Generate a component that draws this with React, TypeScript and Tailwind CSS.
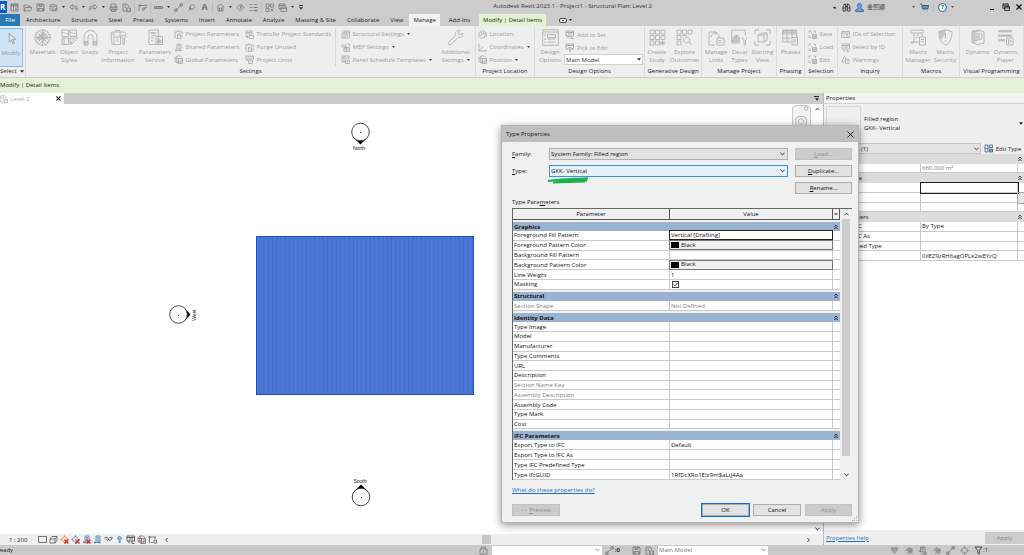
import type { ReactNode } from "react";

type Glyph = { d: string; fill?: string };

// 9x9 glyphs: quick access bar, small ribbon commands, status icons
const small: Record<string, Glyph> = {
    window: { d: "M1 1h7v7h-7zM1 3h7M3.5 3v5M5 5h2M5 6.5h2", fill: "M1 1h7v2h-7z" },
    open: { d: "M1 8V2h2.5l1 1H7v1.5M1 8l1.5-3.5H9L7.5 8z" },
    save: { d: "M1 1h6l1 1v6H1zM3 8V5.5h3.5V8M3 1v2.5h3V1", fill: "M1 5h2v3H1zM6.5 5H8v3H6.5zM3 1h3v2.5H3z" },
    cube: { d: "M4 1l3.5 1.5v4L4 8 1 6.5v-4zM1 2.5L4 4l3.5-1.5M4 4v4", fill: "M5.5 5h3v3.5h-3z" },
    undo: { d: "M3.5 1.5L1 4l2.500 2.500V5H6c1.500 0 2 .7 2 2.500 1-3-.2-4.500-2-4.500H3.500z" },
    redo: { d: "M5.500 1.500L8 4 5.500 6.500V5H3C1.500 5 1 5.700 1 7.500 0 4.500 1.200 3 3 3h2.500z" },
    print: { d: "M2 4V1h5v3M1 4h7v3H1zM2.500 6h4v2.500h-4z", fill: "M1 4h7v1H1z" },
    page: { d: "M1 1h4l1.500 1.500V4M1 1v7h2.500M2.500 3h2M2.500 4.500h1.500M4.500 5h4v3.500h-4z", fill: "M5 6h1v2H5zM7 5.500h1V8H7z" },
    measure: { d: "M1 1v7M8 1v4M1 2.500h7M3 1.500L1.500 2.500 3 3.500M4 5l1.500 3L7 5", fill: "M5 4h3v2H5z" },
    ruler: { d: "M.5 3.500h8v2h-8zM2.500 3.500v1M4.500 3.500v1M6.500 3.500v1", fill: "M.5 3.500h8v2h-8z" },
    line: { d: "M1.500 7.500L7.500 1.500M.7 6v2.300h2.300V6zM6 .7h2.300V3H6z" },
    tag: { d: "M1 8l3-3M5.500 1.500a2.200 2.200 0 1 1-.1 0M3 3.500L2.500 6l3 .5" },
    house: { d: "M.8 4L4.500 1l3.700 3M2 4v4h5V4M3.500 8V5h2v3" },
    diamond: { d: "M4.500 1L8 4.500 4.500 8 1 4.500zM4.500 3v3", fill: "M4.500 1L8 4.500H4.500z" },
    thin: { d: "M.5 1.500h3M.5 4.500h3M.5 7.500h3M5 1.500h3.500M5 4.500h3.500M5 7.500h3.500", fill: "M4.500 6.500h4v2h-4zM4.500 3.700h4v1.300h-4z" },
    close: { d: "M1 1h3v3H1zM5.500 1h3v3h-3zM1 5.500h3v3H1zM5.500 5.500l3 3M8.500 5.500l-3 3" },
    switcher: { d: "M1 1h6v3M1 1v5h2M3 4h5.500v4.500H3zM3 5.500h5.500M1 2.500h6" },
    params: { d: "M1 2h2V1h2v1h3.500v2M1 2v5c0 1 1 1.500 2 1.500M3.500 4h3v4.500h-3zM4.500 5.500h1M8 5v3.500" },
    shared: { d: "M3 1h4v5H3zM1 7.500h7M2 6v2.500M6 6v2.500M4 2.500h2M4 4h2" },
    globe: { d: "M4.500.7a3.800 3.800 0 1 0 .1 0M1 3.500h4M1 6h3M4 1C2 3 2 6 4 8M4.500 3.500h4v5h-4zM5.500 5h2M5.500 6.500h2" },
    transfer: { d: "M1 1h6v3H1zM1 2.500h6M4 5.500h4.500v3H4zM1 5v2h2M2 6l1 1-1 1" },
    units: { d: "M1 1h7.500v3H1zM3 1v1.500M5 1v1.500M7 1v1.500M1 5h2M3.500 5h4v3.500h-4zM5 6.500h1.500" },
    structural: { d: "M3 1h5.500v7H3zM3 3h5.500M1 3h2M1 3v5h2M4.500 4.500h2.500M4.500 6h2.500M5.500 1v2" },
    editType: { d: "M1 1h3v7H1zM1 4.500h3M5.500 1h3v2.500h-3zM5.500 5h3v3h-3z", fill: "M5.500 5h3v3h-3z" },
    mep: { d: "M1 2h4v2H1zM3 4v4.500h5.500V4.500H3M3 6h5.500M5.500 4.500v4M6 1h2.500v2" },
    schedule: { d: "M1 1h7v3M1 1v6h3M1 3h7M3 1v6M4.500 5h4v3.500h-4zM5.500 6.500h2" },
    location: { d: "M4.500.7a3.800 3.800 0 1 0 .1 0M2 2l2 1.500L2.500 6M6 1.500L5 3.500l2 2L6.500 7M6 3.500h2" },
    coords: { d: "M1 .5V8h7.500M1 8l4-4M7 6.500l1.500 1.500" },
    list: { d: "M1 1h7.500v5H1zM1 2.500h7.500M3 4h4M3 6v2.500M6 6v2.500h2.500" },
    pick: { d: "M1 1h7.500v4M1 1v5h2.500M1 2.500h7.500M4 4l1 4.500 1-2 2.500-.5z" },
    sel: { d: "M1 3V1h2M5.500 1h2v2M1 5.500v2h2M4.500 4.500h4v4h-4zM3 3l1.500 1.500M5.500 6.500h2", fill: "M4.500 4.500h4v4h-4z" },
    warn: { d: "M.7 7L3.500 1.500 5 4M.7 7h3M4.500 4.500h3.500v4H4.500zM5.500 6h1.500" },
    ids: { d: "M.7 1.500h8v6h-8zM.7 3h8M2.500 4.500h1M5 4.500h2M2.500 6h1M5 6h2" },
    funnel: { d: "M1 1h7L5.300 4.500V8L3.800 7V4.500z" },
    ring: { d: "M4.500 1.800a2.700 2.700 0 1 0 .1 0M4.500.3v1.500M4.500 7.200v1.500M.3 4.500h1.500M7.200 4.500h1.500" },
    flag: { d: "M1 5l4-3.500V3h3.500M3 5h5.500M3 7h4", fill: "M3 3h5.500v5L5 6.500z" },
    anchor: { d: "M2.500 1v5M.5 4l2 2.500L5 4M3 1h4v4l1.500 3h-5", fill: "M3 1h3v3H3zM4 5h3l1 3H5z" },
    heart: { d: "M1 2.500l3.500 5 3.500-5M1 2.500C2 1 3.500 1 4.500 2.500 5.500 1 7 1 8 2.500", fill: "M1 2.500C2 1 3.500 1 4.500 2.500 5.500 1 7 1 8 2.500L4.500 6z" },
    box: { d: "M.5 1.500h8v6H.5z" },
    box3d: { d: "M1 4h5v4H1zM1 4l2-2.500h5L6 4M8 1.500v4L6 8" },
    glasses: { d: "M.3 3C2 2 3 2 4.500 3.500 6 2 7 2 8.500 3M2 3.500c.5 2.500 2 2.500 2.500.5.5 2 2.500 2.500 3.500-1.500" },
    bulb: { d: "M4.500 1.500a1.800 1.800 0 1 0 .1 0M4 5.500v2h1.200v-2", fill: "M4.500 1.500a1.800 1.800 0 1 0 .1 0" },
    crop: { d: "M0 2h8M1.500 1v7M6 5h2.500v3H6zM3 7.500h2M7 2v2" },
    cart: { d: "M0 1h1.500l1.200 5h5L8.700 2.500H2M3.300 8h.4M7 8h.4", fill: "M2 2.500h6.700L7.700 6h-5z" },
    binoc: { d: "M1 8V4l1.500-3h1.200v7zM8 8V4L6.500 1H5.300v7zM3.700 3.500h1.600M1 5h2.700M5.300 5H8" },
    link: { d: "M1 3h7v5H1zM2.500 3V1h4v2M4.500 4.500v2" },
};

// 17x17 glyphs for the large ribbon buttons
const large: Record<string, Glyph> = {
    cursor: { d: "M6 3v9l2.300-2 1.700 4 1.500-.7-1.700-3.800H13z" },
    materials: {
        d: "M8.500.700a7.800 7.800 0 1 0 .1 0M3 3l11 11M14 3L3 14M8.500 1v15M1 8.500h15M5 1.500L15.500 12M1.500 5L12 15.500M12 1.500L1.500 12M15.500 5L5 15.500",
        fill: "M5 5h3v3H5zM9 9h3v3H9zM9 2l3 3-3 2zM2 9l3 3 2-3zM11 6h4l-2 2z",
    },
    objects: { d: "M1 1h6.500v6.500H1zM9 1h6.500v6.500H9zM1 9h6.500v6.500H1zM9 15.500V9h3M1 4c2-2 4 2 6.500 0M9 4c2-2 4 2 6.500 0M3 9v6M9.500 15.500l1-3L15 7.500l1.500 1.500-4.500 5z" },
    magnet: { d: "M2 16V8a6.500 6.500 0 0 1 13 0v8h-4V8a2.500 2.500 0 0 0-5 0v8zM2 12.500h4M11 12.500h4", fill: "M2 12.500h4V16H2zM11 12.500h4V16h-4z" },
    info: { d: "M1 5c0-2 1.500-2 3-2h9c2 0 3 .5 3 2M1 5h3v10c0 1-2 1-2 0zM5 1.500h5V8M5 8h5.500v7.500H4M6.500 10h2M6.500 12h2M12 6c-1 2 .5 3 1 3v6.500h1.500V9c1.500-.5 2-2 1-3.500L14 7z" },
    service: { d: "M2 1h9.500v14.500H2zM4 4h3M4 6.500h5M4 9h3M4 11.500h2M9 7.500h6.500v8H9zM10.500 14v-2M12.300 14v-4M14 14v-3", fill: "M10 9.500h1.500V14H10zM12.500 11H14v3h-1.500zM3.500 3h6v2h-6z" },
    wrench: { d: "M1.500 13.500l7-7C7.500 3.500 10 .7 13 1.500L10.800 4l1.700 2L15.500 4c.8 3-2 5.500-4.500 4.500l-7 7c-2 1-3.300-.5-2.500-2z" },
    options: { d: "M.7.7h15.600v15.600H.7zM.7 3h15.600M5.500 5.500h8v3h-8zM5.500 10h8M5.500 13h8M3 5.500v.5M3 10v.5M3 13v.5", fill: "M2.500 5h1.500v2H2.500zM2.500 9.500h1.500V11H2.500zM2.500 12.500h1.500V14H2.500z" },
    study: { d: "M1 1h4v4H1zM6.500 1h4v4h-4zM12 1h4v4h-4zM1 6.500h4v4H1zM6.500 6.500h4v4h-4zM12 6.500h4v4h-4zM1 12h4v4H1zM6.500 12h4v4h-4zM13.500 11.500v5M11 14h5M11.700 12.200l3.600 3.600M15.300 12.200l-3.600 3.600" },
    explore: { d: "M1 1h4v4H1zM6.500 1h4v4h-4zM12 1h4v4h-4zM1 6.500h4v4H1zM6.500 6.500h4M1 12h4v4H1zM10.500 8a3 3 0 1 0 .1 0M12.500 13l3 3" },
    links: { d: "M1 3h7l3 3v3M1 3v13h6M11 9h5v7h-7V9zM3 8c0-3 4-4 5-4M6.500 2.500l2 1.500-2 2M10.500 11.500h3M10.500 13.500h3" },
    decal: { d: "M.7 1h13.600v6M.7 1v13h8M3 10l3-4 3 4M12 8c-1 2 0 3 1 3v5h1.500v-5c1-.5 1.500-2 .5-3M.7 12h8", fill: "M1 13V9l4-4 4 5v3z" },
    view: { d: "M1 5V1h4M12 1h4v4M1 12v4h4M16 12v4h-4M4 6l4-2h5v7l-3 2H4zM4 6h6v7M10 6l3-2" },
    phases: { d: "M.7 1h14v8M.7 1v12h8M.7 5h14M.7 9h8M5 1v12M10 1v8M10 8.500h5.500v7.500H10zM11.500 11h3M11.500 13h3", fill: "M.7 1h14v3H.7z" },
    macro: { d: "M2 1h10c2 0 2 3 0 3H2C0 4 0 1 2 1zM4 4v8c0 3-3 3-3 1h8M12 4v3M6 6h3M6 8.500h2M9.500 8h6v8h-6zM11 10.500h3M11 12.500h3" },
    shield: { d: "M8.500.7l6.500 2c0 7-2 11-6.500 13.500C4 13.700 2 9.700 2 2.700zM8.500 4v5M8.500 11v1.500", fill: "M8.500.7L2 2.700c0 3 .3 6 1.500 8.500L8.500 5z" },
    dynamo: { d: "M3 2.500L9 1l6 2v11l-6 1.500-6-2zM6 5v7l7-2.500V5z", fill: "M3 2.500L9 1l2 1.200L6 4v10l-3-1zM7 6l4 .5V9l-4 2z" },
    player: { d: "M2 2h12M2 6.500h12M2 11h6M9.500 9h6.500v7H9.500zM11.500 10.500v4l3-2z", fill: "M1 1h14v2.500H1zM1 5.500h14V8H1zM1 10h7v2.500H1z" },
};

function Icon({ name, className = "size-[9px]", crossed }: { name: string; className?: string; crossed?: boolean }) {
    const g = small[name];
    return (
        <svg viewBox="0 0 9 9" className={`${className} shrink-0`} fill="none" stroke="currentColor" strokeWidth={0.8} aria-hidden="true">
            {g.fill && <path d={g.fill} fill="currentColor" fillOpacity={0.5} stroke="none" />}
            <path d={g.d} />
            {crossed && <path d="M4.500 4.500l4 4M8.500 4.500l-4 4" stroke="#d22" strokeWidth={1.200} />}
        </svg>
    );
}

function BigIcon({ name }: { name: string }) {
    const g = large[name];
    return (
        <svg viewBox="0 0 17 17" className="size-[17px] shrink-0" fill="none" stroke="currentColor" strokeWidth={0.9} aria-hidden="true">
            {g.fill && <path d={g.fill} fill="currentColor" fillOpacity={0.6} stroke="none" />}
            <path d={g.d} />
        </svg>
    );
}

function Caret({ tiny, className = "" }: { tiny?: boolean; className?: string }) {
    return (
        <svg viewBox="0 0 5 3" className={`${tiny ? "w-[3px] h-[2px]" : "w-[4px] h-[3px]"} shrink-0 ${className}`} aria-hidden="true">
            <path d="M0 0h5L2.500 3z" fill="currentColor" />
        </svg>
    );
}

function Chevron({ className = "" }: { className?: string }) {
    return (
        <svg viewBox="0 0 6 4" className={`w-[5px] h-[4px] shrink-0 ${className}`} fill="none" stroke="currentColor" aria-hidden="true">
            <path d="M.5.500L3 3 5.500.500" />
        </svg>
    );
}

function Collapse() {
    return (
        <svg viewBox="0 0 5 6" className="w-[4px] h-[6px]" fill="none" stroke="#111" strokeWidth={1.1} aria-hidden="true">
            <path d="M.5 2.700L2.500.7l2 2M.5 5.500l2-2 2 2" />
        </svg>
    );
}

const quick = [
    "window", "open", "save", "cube", "v", "undo", "v", "redo", "v", "print", "page", "|", "measure", "|",
    "ruler", "v", "line", "tag", "A", "|", "house", "v", "diamond", "thin", "|", "close", "switcher", "v",
];

function TitleBar() {
    return (
        <header className="h-[14px] flex items-center justify-between bg-[#cccccc]">
            <div className="flex-[57] flex items-center text-[#777]">
                <div className="w-[7px] h-[12px] mr-px bg-[#0b5cc4] text-white text-[8px] leading-[11px] font-bold">R</div>
                {quick.map((q, i) => {
                    if (q === "|") return <span key={i} className="w-px h-[11px] mx-px bg-[#bbb]" />;
                    if (q === "v")
                        return (
                            <button key={i} aria-label="More" className="w-[7px] flex justify-center text-[#333]">
                                <Caret tiny />
                            </button>
                        );
                    return (
                        <button key={i} aria-label={q} className="w-[13px] flex justify-center font-bold text-[9px] leading-[10px]">
                            {q === "A" ? "A" : <Icon name={q} />}
                        </button>
                    );
                })}
                <button aria-label="Customize" className="w-[10px] flex flex-col items-center gap-px text-[#333]">
                    <span className="w-[4px] h-px bg-[#333]" />
                    <Caret />
                </button>
            </div>
            <h1 className="h-[13px] leading-[11px] text-[#333] font-medium">Autodesk Revit 2023.1 - Project1 - Structural Plan: Level 2</h1>
            <div className="flex-[43] flex items-center justify-end text-[#555]">
                <span className="text-[5px] text-black w-[6px]">◂</span>
                <button aria-label="Search" className="w-[14px] flex justify-center text-[#222]"><Icon name="binoc" /></button>
                <button aria-label="User" className="w-[13px] flex justify-center">
                    <svg viewBox="0 0 9 9" className="size-[9px]" aria-hidden="true">
                        <path d="M4.500.6C6.300.6 6.500 2 6.300 3.300 6 4.700 5.700 5 5.700 5.500L8.300 7v1.400H.7V7l2.600-1.500C3.300 5 3 4.700 2.700 3.300 2.500 2 2.700.6 4.500.6z" fill="#6fa8e6" stroke="#1d4f9c" strokeWidth={0.8} />
                    </svg>
                </button>
                <span className="w-[46px] pl-px text-[#444]">金熙顯</span>
                <Caret tiny />
                <button aria-label="Store" className="w-[18px] flex justify-center text-[#1c4b72]"><Icon name="cart" /></button>
                <span className="w-px h-[9px] bg-[#bbb]" />
                <button aria-label="Help" className="size-[9px] mx-[4px] rounded-full border border-[#1c5b8a] bg-white text-[#1c5b8a] font-bold leading-[7px]">?</button>
                <Caret tiny className="mr-[36px]" />
                <button aria-label="Minimize" className="w-[4px] h-[5px] mr-[8px] border-b border-black" />
                <button aria-label="Restore" className="w-[8px] mr-[6px] text-black"><Icon name="switcher" className="size-[8px]" /></button>
                <button aria-label="Close" className="w-[8px]">
                    <svg viewBox="0 0 6 6" className="size-[6px]" stroke="#111" strokeWidth={1.200} aria-hidden="true"><path d="M.5.500l5 5M5.500.500l-5 5" /></svg>
                </button>
            </div>
        </header>
    );
}

const tabs = ["Architecture", "Structure", "Steel", "Precast", "Systems", "Insert", "Annotate", "Analyze", "Massing & Site", "Collaborate", "View"];

function RibbonTabs() {
    return (
        <nav className="h-[12px] flex items-stretch gap-px bg-[#cccccc] text-[#222] font-medium leading-[12px]">
            <button className="w-[20px] bg-[#2878b5] text-white">File</button>
            {tabs.map((t) => (
                <button key={t} className="px-[5px]">{t}</button>
            ))}
            <button className="px-[4px] bg-[#f2f2f2]">Manage</button>
            <button className="px-[8px]">Add-Ins</button>
            <button className="px-[4px] bg-[#e3f2d3]">Modify | Detail Items</button>
            <button aria-label="Ribbon display" className="ml-[12px] flex items-center gap-[2px]">
                <span className="w-[8px] h-[5px] rounded-xs border border-[#444] bg-[#eee] flex items-center justify-center"><span className="w-[2px] h-px bg-[#444]" /></span>
                <Caret tiny />
            </button>
        </nav>
    );
}

function Big({ icon, lines, width, caret }: { icon: string; lines: string[]; width: string; caret?: boolean }) {
    return (
        <button className={`${width} h-[40px] pt-[3px] flex flex-col items-center leading-[8px] whitespace-nowrap`}>
            <span className="text-[#b0b0b0]"><BigIcon name={icon} /></span>
            <span className="h-[2px]" />
            {lines.map((l, i) => (
                <span key={l} className="flex items-center gap-[3px]">
                    {l}
                    {caret && i === lines.length - 1 && <Caret tiny className="text-[#444]" />}
                </span>
            ))}
        </button>
    );
}

function Rows({ items, className = "" }: { items: [string, string, boolean?][]; className?: string }) {
    return (
        <div className={`pt-[2px] flex flex-col ${className}`}>
            {items.map(([icon, label, more]) => (
                <button key={label} className="h-[13px] flex items-center gap-[3px] whitespace-nowrap">
                    <span className="text-[#a8a8a8]"><Icon name={icon} /></span>
                    {label}
                    {more && <Caret tiny className="text-[#444]" />}
                </button>
            ))}
        </div>
    );
}

function Panel({ title, children }: { title: ReactNode; children: ReactNode }) {
    return (
        <section className="min-w-0 flex flex-col border-r border-[#dcdcdc]">
            <div className="h-[40px] flex justify-center text-[#9c9c9c]">{children}</div>
            <h2 className="h-[11px] leading-[10px] text-center text-[#222] font-medium whitespace-nowrap">{title}</h2>
        </section>
    );
}

function Ribbon() {
    return (
        <div className="h-[52px] grid grid-cols-[26fr_450fr_59fr_110fr_57fr_75fr_28fr_33fr_65fr_57fr_64fr] bg-[#eeeeee] border-b border-[#cfcfcf]">
            <Panel title={<span className="flex items-center gap-[3px]">Select <Caret /></span>}>
                <button className="w-[23px] h-[39px] mr-auto mt-[2px] pt-px border border-[#86bfee] border-l-0 bg-[#cde3f6] flex flex-col items-center leading-[8px]">
                    <BigIcon name="cursor" />
                    <span className="mt-[2px]">Modify</span>
                </button>
            </Panel>
            <Panel title="Settings">
                <Big icon="materials" lines={["Materials"]} width="w-[30px]" />
                <Big icon="objects" lines={["Object", "Styles"]} width="w-[23px]" />
                <Big icon="magnet" lines={["Snaps"]} width="w-[19px]" />
                <Big icon="info" lines={["Project", "Information"]} width="w-[37px]" />
                <Big icon="service" lines={["Parameters", "Service"]} width="w-[37px]" />
                <Rows className="w-[71px]" items={[["params", "Project Parameters"], ["shared", "Shared Parameters"], ["globe", "Global Parameters"]]} />
                <Rows className="w-[90px]" items={[["transfer", "Transfer Project Standards"], ["params", "Purge Unused"], ["units", "Project Units"]]} />
                <span className="w-px h-[38px] mt-[2px] mr-[5px] bg-[#d6d6d6]" />
                <Rows className="w-[97px]" items={[["structural", "Structural Settings", true], ["mep", "MEP Settings", true], ["schedule", "Panel Schedule Templates", true]]} />
                <Big icon="wrench" lines={["Additional", "Settings"]} width="w-[36px]" caret />
            </Panel>
            <Panel title="Project Location">
                <Rows className="w-[55px]" items={[["location", "Location"], ["coords", "Coordinates", true], ["globe", "Position", true]]} />
            </Panel>
            <Panel title="Design Options">
                <Big icon="options" lines={["Design", "Options"]} width="w-[28px]" />
                <div className="w-[79px] pt-[2px] flex flex-col">
                    <button className="h-[13px] pl-px flex items-center gap-[3px]"><Icon name="list" />Add to Set</button>
                    <button className="h-[13px] pl-px flex items-center gap-[3px]"><Icon name="pick" />Pick to Edit</button>
                    <div className="h-[11px] flex items-center bg-white border border-[#d0d0d0] text-[#333]">
                        <select aria-label="Active design option" className="flex-1 px-px appearance-none outline-none"><option>Main Model</option></select>
                        <Caret className="mr-px" />
                    </div>
                </div>
            </Panel>
            <Panel title="Generative Design">
                <Big icon="study" lines={["Create", "Study"]} width="w-[23px]" />
                <Big icon="explore" lines={["Explore", "Outcomes"]} width="w-[32px]" />
            </Panel>
            <Panel title="Manage Project">
                <Big icon="links" lines={["Manage", "Links"]} width="w-[25px]" />
                <Big icon="decal" lines={["Decal", "Types"]} width="w-[22px]" />
                <Big icon="view" lines={["Starting", "View"]} width="w-[24px]" />
            </Panel>
            <Panel title="Phasing"><Big icon="phases" lines={["Phases"]} width="w-[24px]" /></Panel>
            <Panel title="Selection">
                <Rows className="w-[27px]" items={[["sel", "Save"], ["sel", "Load"], ["sel", "Edit"]]} />
            </Panel>
            <Panel title="Inquiry">
                <Rows className="w-[59px]" items={[["ids", "IDs of Selection"], ["list", "Select by ID"], ["warn", "Warnings"]]} />
            </Panel>
            <Panel title="Macros">
                <Big icon="macro" lines={["Macro", "Manager"]} width="w-[28px]" />
                <Big icon="shield" lines={["Macro", "Security"]} width="w-[26px]" />
            </Panel>
            <Panel title="Visual Programming">
                <Big icon="dynamo" lines={["Dynamo"]} width="w-[28px]" />
                <Big icon="player" lines={["Dynamo", "Player"]} width="w-[28px]" />
            </Panel>
        </div>
    );
}

// Plan drawing: elevation marks round one filled region
function Drawing() {
    return (
        <svg width={812} height={427} viewBox="0 104 812 427" className="block shrink-0" role="img" aria-label="Level 2 plan">
            <defs>
                <pattern id="hatch" width={4.250} height={10} x={256} patternUnits="userSpaceOnUse">
                    <rect width={4.250} height={10} fill="#4d77d3" />
                    <rect x={3.200} width={1} height={10} fill="#406bcb" />
                </pattern>
            </defs>
            <rect x={256.500} y={236.500} width={217} height={158} fill="url(#hatch)" stroke="#1a4fc8" />
            <g fill="#fff" stroke="#333" strokeWidth={0.9}>
                <path d="M353.500 137.500L360.500 144.500 367.500 137.500z" fill="#000" stroke="none" />
                <circle cx={360.500} cy={132} r={8.800} />
                <path d="M184 307.500L190.500 314.500 184 321.500z" fill="#000" stroke="none" />
                <circle cx={178.500} cy={314.500} r={8.800} />
                <path d="M354 491.500L361 484.500 368 491.500z" fill="#000" stroke="none" />
                <circle cx={361} cy={497} r={8.800} />
            </g>
            <g fill="#333">
                <rect x={360} y={132} width={1} height={1} />
                <rect x={178} y={315} width={1} height={1} />
                <rect x={361} y={497} width={1} height={1} />
            </g>
            <g fontSize={5} fill="#111" textAnchor="middle" fontFamily="Liberation Sans, sans-serif">
                <text x={359} y={150}>North</text>
                <text x={360} y={483}>South</text>
                <text transform="translate(196 315) rotate(-90)">West</text>
            </g>
        </svg>
    );
}

const viewIcons: [string, string, boolean?][] = [
    ["box", "text-[#555]"], ["box3d", "text-[#555]"], ["ring", "text-[#e08a1c]", true], ["ring", "text-[#3a78b0]", true], ["shared", "text-[#3a78b0]", true],
    ["shared", "text-[#3a78b0]"], ["glasses", "text-[#444]"], ["bulb", "text-[#2f7fd0]"], ["list", "text-[#444]"], ["globe", "text-[#806a7a]"], ["crop", "text-[#555]"],
];

function ViewArea() {
    return (
        <div className="flex-1 min-w-0 flex flex-col bg-white">
            <div className="h-[11px] flex items-center justify-between bg-[#cbcbcb]">
                <div className="w-[64px] h-full flex items-center bg-white text-[#a8a8a8]">
                    <Icon name="page" className="size-[8px]" />
                    <span className="ml-[2px] flex-1">Level 2</span>
                    <button aria-label="Close view" className="mr-[3px]">
                        <svg viewBox="0 0 6 6" className="size-[5px]" stroke="#111" strokeWidth={1.300} aria-hidden="true"><path d="M.5.500l5 5M5.500.500l-5 5" /></svg>
                    </button>
                </div>
                <button aria-label="Open views" className="mr-[4px] flex flex-col items-center gap-px text-[#222]">
                    <span className="w-[5px] h-px bg-[#222]" />
                    <Caret />
                </button>
            </div>
            <div className="flex-1 min-h-0 flex">
                <div className="flex-1 min-w-0 relative overflow-hidden">
                    <Drawing />
                    <div className="absolute right-px top-px w-[19px] h-[60px] rounded-t-sm border border-[#c8c8c8] bg-[#f4f4f4] text-[#b5b5b5] flex flex-col items-center">
                        <svg viewBox="0 0 17 20" className="w-[17px] h-[20px] shrink-0" fill="none" stroke="currentColor" aria-hidden="true">
                            <circle cx={13} cy={2.500} r={1.800} />
                            <rect x={2.500} y={10.500} width={11} height={10} rx={4} />
                            <circle cx={8} cy={15.500} r={2.800} />
                        </svg>
                    </div>
                </div>
                <div className="w-[11px] py-[3px] flex flex-col items-center justify-between text-[#111]">
                    <Chevron className="rotate-180" />
                    <Chevron />
                </div>
            </div>
            <div className="h-[11px] pl-[9px] flex items-center bg-[#efefef] text-[#222]">
                <span className="w-[28px]">1 : 200</span>
                {viewIcons.map(([name, color, crossed], i) => (
                    <button key={i} aria-label={name} className={`w-[11px] flex justify-center ${color}`}><Icon name={name} crossed={crossed} /></button>
                ))}
                <Chevron className="ml-[6px] rotate-90" />
                <div className="ml-auto h-[9px] w-[329px] flex items-center justify-between">
                    <span className="w-[9px] h-full bg-[#c8c8c8]" />
                    <Chevron className="-rotate-90" />
                </div>
                <span className="w-[12px]" />
            </div>
        </div>
    );
}

type Prop = [string, string];
const groups: { title: string; rows: Prop[] }[] = [
    { title: "Dimensions", rows: [["Area", "660.000 m²"]] },
    { title: "Identity Data", rows: [["Image", ""], ["Comments", ""], ["Mark", ""]] },
    { title: "IFC Parameters", rows: [["Export to IFC", "By Type"], ["Export to IFC As", ""], ["IFC Predefined Type", ""], ["IfcGUID", "0iIEZ9zRH6agOPLk2wEYzQ"]] },
];

function Properties() {
    return (
        <aside className="w-[201px] shrink-0 flex flex-col border-l border-[#bdbdbd] bg-white text-[#222]">
            <h2 className="h-[11px] pl-[2px] leading-[10px] bg-[#f3f3f3] border-b border-[#d5d5d5]">Properties</h2>
            <div className="h-[39px] pl-[2px] pr-px flex items-center gap-[3px] bg-[#efefef] leading-[9px]">
                <div className="w-[35px] h-[36px] border border-[#d8d8d8]" />
                <div className="flex-1">
                    <p>Filled region</p>
                    <p>GKK- Vertical</p>
                </div>
                <Caret />
            </div>
            <div className="h-[11px] flex items-center bg-[#efefef]">
                <div className="w-[157px] h-[11px] flex items-center bg-[#e3e3e3] border border-[#c4c4c4]">
                    <select aria-label="Selected elements" className="flex-1 pl-px appearance-none outline-none"><option>Detail Items (1)</option></select>
                    <Chevron className="mr-px" />
                </div>
                <button className="flex-1 flex items-center justify-center gap-[3px] whitespace-nowrap"><span className="text-[#2f5f88]"><Icon name="editType" /></span>Edit Type</button>
            </div>
            <table className="w-full h-[107px] table-fixed border-separate border-spacing-0 leading-[8px]">
                <colgroup>
                    <col />
                    <col className="w-[97px]" />
                    <col className="w-[6px]" />
                </colgroup>
                {groups.map((g) => (
                    <tbody key={g.title}>
                        <tr className="bg-[#dcdcdc]">
                            <th colSpan={2} className="pl-[2px] text-left font-normal border-b border-[#dcdcdc]">{g.title}</th>
                            <td><Collapse /></td>
                        </tr>
                        {g.rows.map(([name, value]) => (
                            <tr key={name}>
                                <td className="pl-[2px] border-r border-b border-[#c9c9c9] whitespace-nowrap">{name}</td>
                                <td className={`pl-px border-r border-b border-[#c9c9c9] ${name === "Image" ? "outline outline-[#222]" : ""} ${name === "Area" ? "text-[#777]" : ""}`}>{value}</td>
                                <td className={name === "Comments" ? "bg-[#e4e4e4] outline outline-[#aaa]" : "border-b border-[#c9c9c9]"} />
                            </tr>
                        ))}
                    </tbody>
                ))}
            </table>
            <div className="mt-auto h-[15px] pl-[2px] flex items-center justify-between bg-[#efefef]">
                <a href="#help" className="text-[#1a6fc4] underline">Properties help</a>
                <button className="w-[39px] h-[12px] bg-[#cccccc] text-[#888]">Apply</button>
            </div>
        </aside>
    );
}

const typeGroups: { title: string; rows: Prop[] }[] = [
    {
        title: "Graphics",
        rows: [["Foreground Fill Pattern", "Vertical [Drafting]"], ["Foreground Pattern Color", "Black"], ["Background Fill Pattern", ""], ["Background Pattern Color", "Black"], ["Line Weight", "1"], ["Masking", ""]],
    },
    { title: "Structural", rows: [["Section Shape", "Not Defined"]] },
    {
        title: "Identity Data",
        rows: [["Type Image", ""], ["Model", ""], ["Manufacturer", ""], ["Type Comments", ""], ["URL", ""], ["Description", ""], ["Section Name Key", ""], ["Assembly Description", ""], ["Assembly Code", ""], ["Type Mark", ""], ["Cost", ""]],
    },
    { title: "IFC Parameters", rows: [["Export Type to IFC", "Default"], ["Export Type to IFC As", ""], ["Type IFC Predefined Type", ""], ["Type IfcGUID", "1RfDcXRo1EIx9m$aLtJ4Aa"]] },
];
const readOnly = ["Section Shape", "Section Name Key", "Assembly Description"];

function Value({ name, value }: { name: string; value: string }) {
    if (name === "Masking")
        return (
            <span className="relative block size-[7px] ml-[2px]">
                <input type="checkbox" defaultChecked aria-label="Masking" className="block size-[7px] appearance-none border border-[#444] bg-white" />
                <svg viewBox="0 0 7 7" className="absolute inset-0 size-[7px] pointer-events-none" fill="none" stroke="#222" strokeWidth={0.9} aria-hidden="true"><path d="M1.700 3.500l1.300 1.400L5.500 2" /></svg>
            </span>
        );
    if (value === "Black")
        return (
            <button className="w-full h-[8px] leading-[7px] flex items-center gap-[2px] bg-[#f0f0f0] outline outline-[#777] text-left">
                <span className="w-[8px] h-[6px] ml-px bg-black" />
                Black
            </button>
        );
    if (name === "Foreground Fill Pattern")
        return <input aria-label={name} defaultValue={value} className="block w-full h-[8px] pl-px leading-[8px] outline outline-[#222]" />;
    return <span className="pl-px">{value}</span>;
}

function DialogButton({ children, className = "", disabled }: { children: ReactNode; className?: string; disabled?: boolean }) {
    return (
        <button disabled={disabled} className={`h-[12px] leading-[10px] border ${disabled ? "bg-[#cccccc] border-[#c2c2c2] text-[#909090]" : "bg-[#e2e2e2] border-[#adadad] text-[#111]"} ${className}`}>
            {children}
        </button>
    );
}

function TypeProperties() {
    return (
        <div role="dialog" aria-labelledby="type-properties" className="absolute left-[501px] top-[125px] w-[358px] bg-[#f0f0f0] text-[#111] border border-[#b5b5b5] shadow-[0_2px_8px_rgba(0,0,0,0.45)]">
            <div className="h-[16px] px-[4px] flex items-center justify-between bg-[#bfbfbf]">
                <h2 id="type-properties">Type Properties</h2>
                <button aria-label="Close dialog">
                    <svg viewBox="0 0 7 7" className="size-[7px]" stroke="#111" strokeWidth={0.9} aria-hidden="true"><path d="M.5.500l6 6M6.500.500l-6 6" /></svg>
                </button>
            </div>
            <div className="pl-[10px] pr-[6px] pt-[6px]">
                <div className="grid grid-cols-[37px_1fr_57px] gap-y-[5px] items-center">
                    <label htmlFor="family"><u>F</u>amily:</label>
                    <div className="h-[12px] mr-[7px] flex items-center bg-[#e1e1e1] border border-[#b0b0b0]">
                        <select id="family" className="flex-1 pl-px appearance-none outline-none"><option>System Family: Filled region</option></select>
                        <Chevron className="mr-[2px]" />
                    </div>
                    <DialogButton disabled><u>L</u>oad...</DialogButton>
                    <label htmlFor="type"><u>T</u>ype:</label>
                    <div className="relative h-[12px] mr-[7px] flex items-center bg-[#e5f1fb] border border-[#3c8fd9]">
                        <select id="type" className="flex-1 pl-px appearance-none outline-none"><option>GKK- Vertical</option></select>
                        <Chevron className="mr-[2px]" />
                        <svg viewBox="0 0 44 8" className="absolute -left-[3px] top-[10px] w-[44px] h-[8px] pointer-events-none" fill="none" stroke="#1cb14b" strokeWidth={2} aria-hidden="true">
                            <path d="M1 5C10 3.500 24 2.500 41 2.500L8 5l32-.5L6 6.500 38 5.500" />
                        </svg>
                    </div>
                    <DialogButton><u>D</u>uplicate...</DialogButton>
                    <DialogButton className="col-start-3"><u>R</u>ename...</DialogButton>
                </div>
                <p className="mt-[3px] h-[11px] leading-[10px]">Type Para<u>m</u>eters</p>
                <div className="h-[272px] flex border-t border-l border-[#666] bg-white">
                    <table className="flex-1 h-full table-fixed border-separate border-spacing-0 leading-[8px] font-medium">
                        <colgroup>
                            <col className="w-[157px]" />
                            <col />
                            <col className="w-[7px]" />
                        </colgroup>
                        <thead>
                            <tr className="h-[11px]">
                                <th className="font-medium bg-[#f0f0f0] border-r border-b border-[#555]">Parameter</th>
                                <th className="font-medium bg-[#f0f0f0] border-r border-b border-[#555]">Value</th>
                                <th className="font-medium bg-[#f0f0f0] border-r border-b border-[#555]">=</th>
                            </tr>
                        </thead>
                        {typeGroups.map((g) => (
                            <tbody key={g.title}>
                                <tr className="h-[11px] bg-[#9ab3d1]">
                                    <th colSpan={2} className="pl-px text-left font-bold border-t-2 border-[#f0f0f0]">{g.title}</th>
                                    <td className="border-t-2 border-[#f0f0f0] pl-px"><Collapse /></td>
                                </tr>
                                {g.rows.map(([name, value]) => (
                                    <tr key={name} className={readOnly.includes(name) ? "text-[#808080]" : ""}>
                                        <td className="pl-px border-r border-b border-[#cacaca] whitespace-nowrap">{name}</td>
                                        <td className="p-0 border-r border-b border-[#cacaca]"><Value name={name} value={value} /></td>
                                        <td className="border-b border-[#cacaca]" />
                                    </tr>
                                ))}
                            </tbody>
                        ))}
                    </table>
                    <div className="w-[12px] bg-[#f0f0f0] flex flex-col items-center py-[3px] gap-[3px]">
                        <Chevron className="rotate-180" />
                        <span className="w-[8px] h-[237px] bg-[#cdcdcd]" />
                        <Chevron className="mt-auto" />
                    </div>
                </div>
                <a href="#properties" className="block mt-[6px] leading-[9px] text-[#1a6fc4] underline">What do these properties do?</a>
                <div className="mt-[9px] mb-[6px] flex gap-[4px]">
                    <DialogButton disabled className="w-[48px] mr-auto">&lt;&lt; <u>P</u>review</DialogButton>
                    <DialogButton className="w-[47px] outline outline-[#0a6cd6] border-[#0a6cd6]">OK</DialogButton>
                    <DialogButton className="w-[48px]">Cancel</DialogButton>
                    <DialogButton disabled className="w-[47px]">Apply</DialogButton>
                </div>
            </div>
            <svg viewBox="0 0 6 6" className="absolute right-0 bottom-0 size-[6px]" fill="#aaa" aria-hidden="true"><path d="M4 0h1v1H4zM2 2h1v1H2zM4 2h1v1H4zM0 4h1v1H0zM2 4h1v1H2zM4 4h1v1H4z" /></svg>
        </div>
    );
}

function StatusBar() {
    return (
        <footer className="h-[10px] flex items-center bg-[#c9c9c9] text-[#777] overflow-hidden">
            <span className="-ml-[4px] text-[#222]">Ready</span>
            <div className="ml-auto flex items-center">
                <Icon name="link" />
                <div className="w-[110px] h-[9px] ml-[4px] flex items-center bg-white">
                    <select aria-label="Workset" className="flex-1 appearance-none outline-none"><option></option></select>
                    <Chevron className="mr-[2px]" />
                </div>
                <span className="ml-[3px] flex items-center gap-px"><Icon name="line" /><b className="text-[#333]">:0</b></span>
                <span className="ml-[12px] flex gap-[4px]"><Icon name="save" /><Icon name="page" /></span>
                <div className="w-[110px] h-[9px] ml-[4px] flex items-center bg-white">
                    <select aria-label="Design option" className="flex-1 pl-px appearance-none outline-none"><option>Main Model</option></select>
                    <Chevron className="mr-[2px]" />
                </div>
                <span className="ml-[122px] mr-[36px] flex items-center gap-[5px]">
                    <Icon name="heart" /><Icon name="flag" /><Icon name="anchor" /><Icon name="flag" /><Icon name="line" /><Icon name="ring" />
                    <span className="flex text-[#333]"><Icon name="funnel" />:1</span>
                </span>
            </div>
        </footer>
    );
}

export default function App() {
    return (
        <div className="relative h-screen flex flex-col overflow-hidden text-[6px] leading-[8px] font-['Open_Sans','Noto_Sans_CJK_TC',sans-serif]">
            <TitleBar />
            <RibbonTabs />
            <Ribbon />
            <div className="h-[15px] leading-[14px] bg-[#e5f0d9] text-[#222] font-medium">Modify | Detail Items</div>
            <main className="flex-1 min-h-0 flex">
                <ViewArea />
                <Properties />
            </main>
            <StatusBar />
            <TypeProperties />
        </div>
    );
}
